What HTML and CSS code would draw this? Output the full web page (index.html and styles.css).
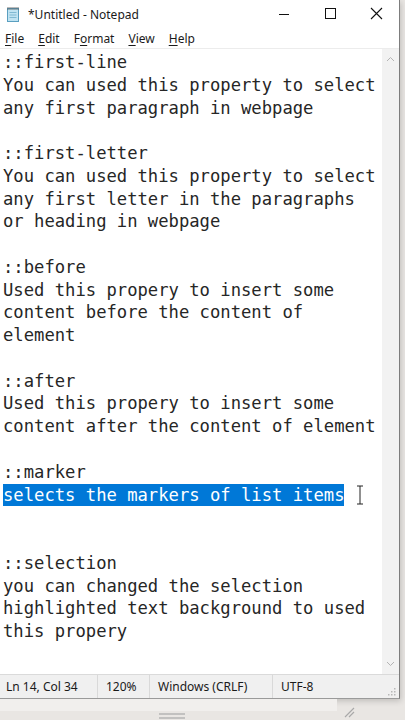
FILE: index.html
```html
<!DOCTYPE html>
<html>
  <head>
    <meta charset="UTF-8">
    <title>Notepad</title>
    <link rel="stylesheet" href="styles.css">
  </head>
  <body>
    <div class="window">
      <div class="titlebar">
        <svg class="app-icon" width="14" height="16" viewBox="0 0 14 16">
          <rect x="1.5" y="2.5" width="11" height="13" fill="#bfe3f2" stroke="#5a9fc0"/>
          <line x1="3.5" y1="6.5" x2="10.5" y2="6.5" stroke="#7fb9d3"/>
          <line x1="3.5" y1="9" x2="10.5" y2="9" stroke="#7fb9d3"/>
          <line x1="3.5" y1="11.5" x2="10.5" y2="11.5" stroke="#7fb9d3"/>
          <path d="M2 1v3M4 1v3M6 1v3M8 1v3M10 1v3M12 1v3" stroke="#555" stroke-width="0.8"/>
        </svg>
        <span class="title">*Untitled - Notepad</span>
        <div class="controls">
          <svg width="46" height="28" viewBox="0 0 46 28"><line x1="18" y1="14.5" x2="28" y2="14.5" stroke="#111" stroke-width="1"/></svg>
          <svg width="46" height="28" viewBox="0 0 46 28"><rect x="18.5" y="8.5" width="10" height="10" fill="none" stroke="#111" stroke-width="1"/></svg>
          <svg width="46" height="28" viewBox="0 0 46 28"><path d="M18 8l11 11M29 8L18 19" stroke="#111" stroke-width="1.1"/></svg>
        </div>
      </div>

      <div class="menubar">
        <span><u>F</u>ile</span>
        <span><u>E</u>dit</span>
        <span>F<u>o</u>rmat</span>
        <span><u>V</u>iew</span>
        <span><u>H</u>elp</span>
      </div>

      <div class="editor">
        <div class="text">
          <div>::first-line</div>
          <div>You can used this property to select</div>
          <div>any first paragraph in webpage</div>
          <div>&nbsp;</div>
          <div>::first-letter</div>
          <div>You can used this property to select</div>
          <div>any first letter in the paragraphs</div>
          <div>or heading in webpage</div>
          <div>&nbsp;</div>
          <div>::before</div>
          <div>Used this propery to insert some</div>
          <div>content before the content of</div>
          <div>element</div>
          <div>&nbsp;</div>
          <div>::after</div>
          <div>Used this propery to insert some</div>
          <div>content after the content of element</div>
          <div>&nbsp;</div>
          <div>::marker</div>
          <div class="sel-line"><span class="selected">selects the markers of list items</span><svg class="ibeam" width="8" height="20" viewBox="0 0 8 20"><path d="M1 1h6M4 1v18M1 19h6" stroke="#222" stroke-width="1"/></svg></div>
          <div>&nbsp;</div>
          <div>&nbsp;</div>
          <div>::selection</div>
          <div>you can changed the selection</div>
          <div>highlighted text background to used</div>
          <div>this propery</div>
        </div>
        <div class="scrollbar">
          <svg width="17" height="17" viewBox="0 0 17 17"><path d="M5 10l3.5-3.5L12 10" fill="none" stroke="#b4b4b4" stroke-width="1"/></svg>
          <svg width="17" height="17" viewBox="0 0 17 17"><path d="M5 7l3.5 3.5L12 7" fill="none" stroke="#b4b4b4" stroke-width="1"/></svg>
        </div>
      </div>

      <div class="statusbar">
        <div class="cell pos">Ln 14, Col 34</div>
        <div class="cell zoom">120%</div>
        <div class="cell eol">Windows (CRLF)</div>
        <div class="cell enc">UTF-8</div>
        <svg class="grip" width="12" height="12" viewBox="0 0 12 12">
          <g fill="#b8b8b8">
            <rect x="9" y="3" width="1.5" height="1.5"/>
            <rect x="6" y="6" width="1.5" height="1.5"/><rect x="9" y="6" width="1.5" height="1.5"/>
            <rect x="3" y="9" width="1.5" height="1.5"/><rect x="6" y="9" width="1.5" height="1.5"/><rect x="9" y="9" width="1.5" height="1.5"/>
          </g>
        </svg>
      </div>
    </div>

    <div class="behind">
      <div class="behind-bar"></div>
      <svg class="handle" width="26" height="8" viewBox="0 0 26 8"><path d="M0 2h26M0 6h26" stroke="#b5b5b5" stroke-width="1.5"/></svg>
      <svg class="corner" width="12" height="12" viewBox="0 0 12 12"><path d="M2 11L11 2M6 11L11 6" stroke="#a9a9a9" stroke-width="1.2"/></svg>
    </div>
  </body>
</html>
```

FILE: styles.css
```css
body {
  margin: 0;
  width: 405px;
  height: 720px;
  overflow: hidden;
  background-color: #e9e6e3;
  font-family: "Noto Sans", "Open Sans", sans-serif;
  color: #111;
}
.window {
  width: 399px;
  height: 698px;
  background-color: #fff;
  border-right: 1px solid #7d7d7d;
  border-bottom: 1px solid #9a9a9a;
  display: flex;
  flex-direction: column;
  box-shadow: 1px 2px 6px rgba(0, 0, 0, 0.18);
}
.titlebar {
  height: 28px;
  display: flex;
  align-items: center;
  flex-shrink: 0;
}
.app-icon {
  margin-left: 6px;
  margin-right: 8px;
}
.title {
  font-size: 12px;
  color: #1a1a1a;
  flex: 1;
}
.controls {
  display: flex;
}
.controls svg {
  display: block;
}
.menubar {
  height: 20px;
  display: flex;
  align-items: center;
  gap: 14px;
  padding-left: 5px;
  font-size: 12px;
  color: #1a1a1a;
  flex-shrink: 0;
  border-bottom: 1px solid #ececec;
}
.menubar u {
  text-decoration-thickness: 1px;
  text-underline-offset: 2px;
}
.editor {
  flex: 1;
  display: flex;
  min-height: 0;
}
.text {
  flex: 1;
  padding-left: 3px;
  padding-top: 2px;
  font-family: "DejaVu Sans Mono", "Liberation Mono", monospace;
  font-size: 17.2px;
  line-height: 22.77px;
  color: #262626;
  white-space: nowrap;
  overflow: hidden;
}
.sel-line {
  display: flex;
  align-items: center;
}
.selected {
  background-color: #0078d7;
  color: #fff;
}
.ibeam {
  margin-left: 12px;
}
.scrollbar {
  width: 17px;
  background-color: #f2f2f2;
  display: flex;
  flex-direction: column;
  justify-content: space-between;
  padding: 2px 0;
}
.statusbar {
  height: 23px;
  flex-shrink: 0;
  display: flex;
  align-items: center;
  background-color: #f0f0f0;
  border-top: 1px solid #dadada;
  font-size: 12px;
  color: #1a1a1a;
}
.cell {
  height: 100%;
  display: flex;
  align-items: center;
  padding-left: 6px;
  border-right: 1px solid #d9d9d9;
  box-sizing: border-box;
}
.pos { width: 98px; }
.zoom { width: 52px; padding-left: 8px; }
.eol { width: 123px; padding-left: 8px; }
.enc { flex: 1; border-right: none; padding-left: 8px; }
.grip {
  align-self: flex-end;
  margin-right: 2px;
  margin-bottom: 1px;
}
.behind {
  position: relative;
  height: 21px;
}
.behind-bar {
  width: 337px;
  height: 12px;
  background-color: #f1efed;
}
.handle {
  position: absolute;
  left: 159px;
  top: 13px;
}
.corner {
  position: absolute;
  left: 343px;
  top: 7px;
}
```
